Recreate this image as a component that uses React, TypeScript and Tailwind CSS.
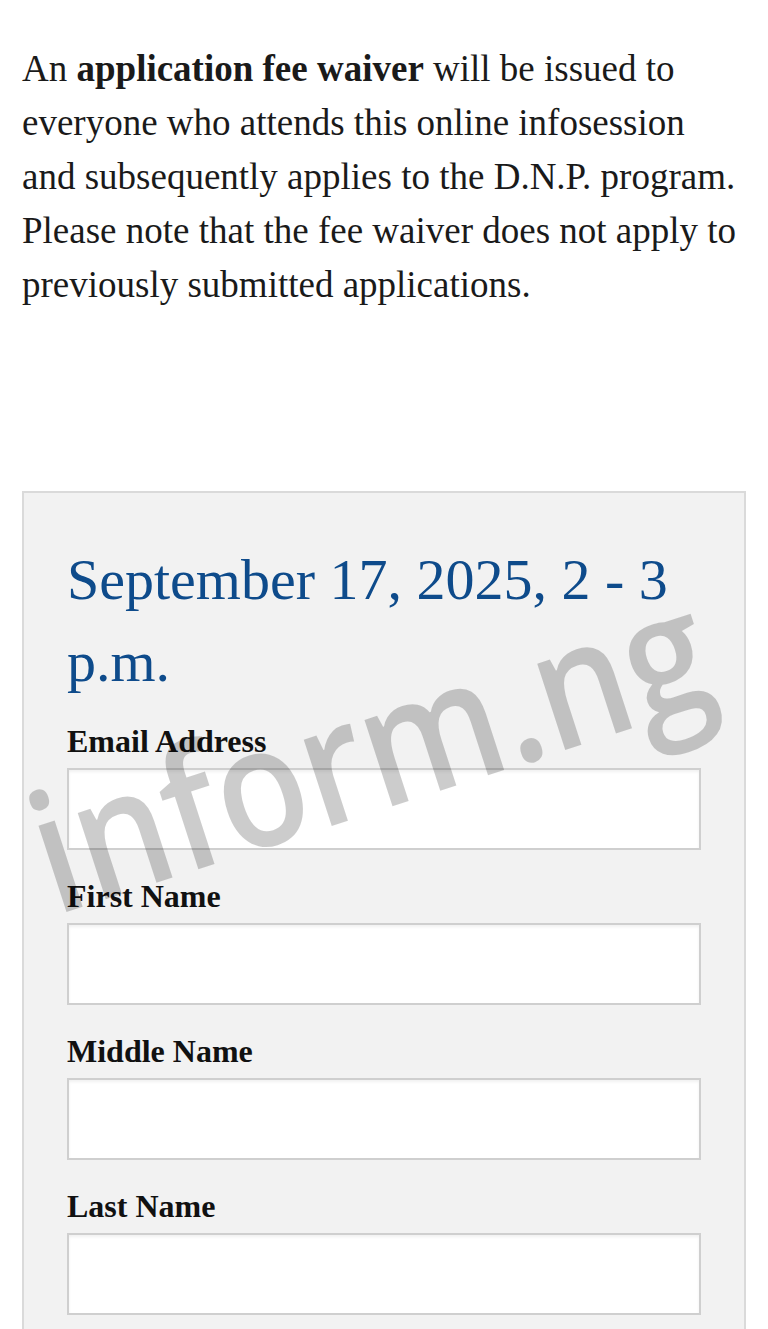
import React from "react";

const serif = { fontFamily: '"Liberation Serif", "DejaVu Serif", serif' };

function Field({ label }: { label: string }) {
  return (
    <div className="flex flex-col">
      <label className="text-[32px] font-bold leading-[36px] text-[#111]">{label}</label>
      <div className="mt-[9px] h-[82px] border-2 border-[#cfcfcf] bg-white shadow-[inset_0_2px_3px_rgba(0,0,0,0.06)]" />
    </div>
  );
}

export default function App() {
  return (
    <div className="relative min-h-[1329px] overflow-hidden bg-white text-[#1a1a1a]" style={serif}>
      <p className="whitespace-nowrap px-[22px] pt-[42px] text-[37px] leading-[54px]">
        An <strong className="font-bold">application fee waiver</strong> will be issued to
        <br />
        everyone who attends this online infosession
        <br />
        and subsequently applies to the D.N.P. program.
        <br />
        Please note that the fee waiver does not apply to
        <br />
        previously submitted applications.
      </p>
      <div className="mx-[22px] mt-[179px] border-2 border-[#dadada] bg-[#f2f2f2] px-[43px] pt-[46px] pb-[40px]">
        <h2 className="text-[58px] leading-[82px] text-[#0e4b8b]">
          September 17, 2025, 2 - 3
          <br />
          p.m.
        </h2>
        <div className="mt-[20px] flex flex-col gap-[28px]">
          <Field label="Email Address" />
          <Field label="First Name" />
          <Field label="Middle Name" />
          <Field label="Last Name" />
        </div>
      </div>
      <div
        className="pointer-events-none absolute left-[35px] top-[770px] origin-left -rotate-[18deg] scale-x-[0.88] select-none text-[168px] font-semibold leading-none text-black/20"
        style={{ fontFamily: '"Open Sans", sans-serif' }}
      >
        inform.ng
      </div>
    </div>
  );
}
